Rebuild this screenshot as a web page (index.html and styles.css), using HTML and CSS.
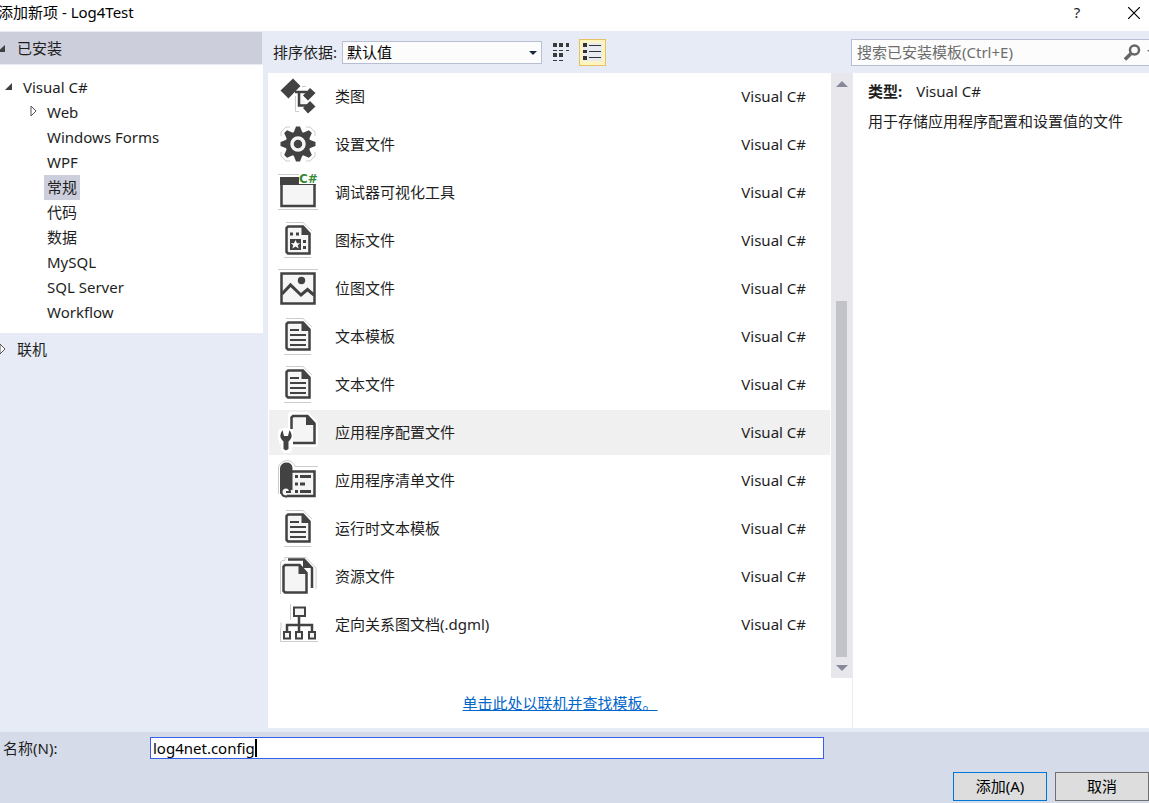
FILE: index.html
```html
<!DOCTYPE html>
<html lang="zh-CN">

<head>
  <meta charset="UTF-8" />
  <meta name="viewport" content="width=device-width, initial-scale=1.0" />
  <title>添加新项 - Log4Test</title>
  <link rel="stylesheet" href="styles.css">
</head>

<body>
  <!-- 公用图标 -->
  <svg class="defs" aria-hidden="true">
    <symbol id="icon-text" viewBox="0 0 40 41">
      <path class="halo" d="M8 2.500H25L34 11M6 38.500H33" />
      <path class="line" d="M10 6.500H25L31.500 13.500V33.500H10L8.500 32V8Z" />
      <path class="dark" d="M23.500 6V15H32.500Z" />
      <path class="line thin" d="M12 14H21M12 19H28M12 24H28M12 29H28" />
    </symbol>
  </svg>

  <header class="title-bar">
    <h1>添加新项 - Log4Test</h1>
    <button class="win-btn" type="button" aria-label="帮助">?</button>
    <button class="win-btn" type="button" aria-label="关闭">
      <svg width="12" height="12" viewBox="0 0 12 12"><path d="M0 0L12 12M12 0L0 12" stroke="#000" stroke-width="1.2" /></svg>
    </button>
  </header>

  <div class="content">
    <nav class="sidebar">
      <h2 class="group open">
        <svg class="arrow" width="10" height="10" viewBox="0 0 10 10"><path d="M9 1V8H1Z" fill="#404040" /></svg>已安装
      </h2>
      <ul class="tree">
        <li class="root"><svg class="arrow" width="10" height="10" viewBox="0 0 10 10"><path d="M8 1V8H1Z" fill="#404040" /></svg>Visual C#
          <ul>
            <li><svg class="arrow" width="8" height="12" viewBox="0 0 8 12"><path d="M1 1V11L6 6Z" fill="#fff" stroke="#555" /></svg><span>Web</span></li>
            <li><span>Windows Forms</span></li>
            <li><span>WPF</span></li>
            <li><span class="current">常规</span></li>
            <li><span>代码</span></li>
            <li><span>数据</span></li>
            <li><span>MySQL</span></li>
            <li><span>SQL Server</span></li>
            <li><span>Workflow</span></li>
          </ul>
        </li>
      </ul>
      <h2 class="group">
        <svg class="arrow" width="8" height="12" viewBox="0 0 8 12"><path d="M1 1V11L6 6Z" fill="#fff" stroke="#555" /></svg>联机
      </h2>
    </nav>

    <main class="main">
      <div class="toolbar">
        <label for="sort">排序依据:</label>
        <div class="select">
          <select id="sort">
            <option>默认值</option>
          </select>
        </div>
        <button class="view-btn" type="button" aria-label="小图标">
          <svg width="17" height="19" viewBox="0 0 17 19" fill="#3a3a3a">
            <path d="M1 0h4v4H1zM7 0h4v4H7zM14 0h3v4h-3zM1 10h4v4H1zM7 10h4v4H7zM1 7h4v1H1zM7 7h4v1H7zM14 7h3v1h-3zM1 17h4v1H1zM7 17h4v1H7z" />
          </svg>
        </button>
        <button class="view-btn active" type="button" aria-label="列表">
          <svg width="19" height="18" viewBox="0 0 19 18">
            <path d="M0 0h19v18H0z" fill="#e9ebf0" />
            <path d="M0 0h4v4H0zM0 7h4v3H0zM0 13h4v4H0zM6 2h12v1H6zM6 8h12v1H6zM6 14h12v1H6z" fill="#333" />
          </svg>
        </button>
        <div class="search">
          <input type="text" placeholder="搜索已安装模板(Ctrl+E)" aria-label="搜索已安装模板">
          <svg width="17" height="17" viewBox="0 0 17 17" fill="none" stroke="#666">
            <circle cx="10.500" cy="6" r="4.500" stroke-width="2.500" />
            <path d="M7 9.500L1 15.500" stroke-width="3.500" />
          </svg>
          <i class="drop"></i>
        </div>
      </div>

      <div class="panes">
        <section class="list">
          <div class="scroller">
            <ul class="items">
              <li>
                <svg viewBox="0 0 40 41">
                  <path class="halo" d="M17.500 20V35.500H21M24 10.500H28" />
                  <path class="line" d="M17 16H29M21 16V29.500H29" />
                  <path class="dark" d="M15 2.500L22.500 10L10.500 22.500L2.500 14.500ZM32 12L37.500 17L30 24.500L25 19.500ZM32 25L37.500 30.500L30 37.500L25 32Z" />
                </svg>
                <span>类图</span><em>Visual C#</em>
              </li>
              <li>
                <svg viewBox="0 0 40 41">
                  <path class="halo" d="M3 12V8L8 3H12M28 3H32L37 8V12M37 28V32L32 37H28M12 37H8L3 32V28" />
                  <g class="dark">
                    <circle cx="20" cy="20" r="12.500" />
                    <path id="tooth" d="M15.500 9L18 2.500H22L24.500 9V31L22 37.500H18L15.500 31Z" />
                    <use href="#tooth" transform="rotate(45 20 20)" />
                    <use href="#tooth" transform="rotate(90 20 20)" />
                    <use href="#tooth" transform="rotate(135 20 20)" />
                  </g>
                  <circle cx="20" cy="20" r="6" fill="#444" stroke="#f5f5f5" stroke-width="3.500" />
                </svg>
                <span>设置文件</span><em>Visual C#</em>
              </li>
              <li>
                <svg viewBox="0 0 40 41">
                  <path class="halo" d="M0 2.500H21M0 37.500H40" />
                  <path class="line" d="M3.500 8V34H36.500V8" />
                  <path class="dark" d="M2 5H22V12H38V13H2Z" />
                  <path d="M21 1H40V12H21Z" fill="#fff" />
                  <text class="lang" x="21" y="11">C#</text>
                </svg>
                <span>调试器可视化工具</span><em>Visual C#</em>
              </li>
              <li>
                <svg viewBox="0 0 40 41">
                  <path class="halo" d="M8 2.500H25L34 11M6 37.500H33" />
                  <path class="line" d="M10 6.500H25L31.500 13.500V33.500H10L8.500 32V8Z" />
                  <path class="dark" d="M23.500 6V15H32.500ZM12 12.500h3v3h-3zM18 12.500h3v3h-3zM12 19H23V30H12ZM25 20h3v3h-3zM25 26h3v3h-3z" />
                  <path d="M17.500 20L19 23.200H22.300L19.700 25.200L20.700 28.500L17.500 26.500L14.300 28.500L15.300 25.200L12.700 23.200H16Z" fill="#fff" />
                </svg>
                <span>图标文件</span><em>Visual C#</em>
              </li>
              <li>
                <svg viewBox="0 0 40 41">
                  <path class="halo" d="M0 1.500H40" />
                  <path class="line" d="M3.500 5.500H36.500V35.500H3.500Z" />
                  <path class="line thick" d="M4 26L12.500 17L23 27L29.500 21.500L36 27" />
                  <circle class="dark" cx="23.500" cy="12.500" r="3.700" />
                </svg>
                <span>位图文件</span><em>Visual C#</em>
              </li>
              <li><svg><use href="#icon-text" /></svg><span>文本模板</span><em>Visual C#</em></li>
              <li><svg><use href="#icon-text" /></svg><span>文本文件</span><em>Visual C#</em></li>
              <li class="selected">
                <svg viewBox="0 0 40 41">
                  <path d="M12 0H30L40 10V33L38 35H14V39L11 41H6L3 38V31L0 27V20L5 16H10V2Z" fill="#fff" />
                  <path class="line" d="M15 4H29.500L36.500 11.500V31H13.500V5.500Z" />
                  <path class="dark" d="M28 3V13H37.500Z" />
                  <path d="M1 17H15V33H12V38H4V32H1Z" fill="#fff" />
                  <path class="dark" d="M4.500 18L6 24H10L11.500 18Q15.500 24 12 28L10.500 29.500V37L8 38.500L5.500 37V29.500L4 28Q.500 24 4.500 18Z" />
                </svg>
                <span>应用程序配置文件</span><em>Visual C#</em>
              </li>
              <li>
                <svg viewBox="0 0 40 41">
                  <path class="halo" d="M.500 34V7Q2 1 9 .500Q15 1 17 6.500H40" />
                  <path class="line" d="M13 11.500H36.500V36H8" />
                  <path class="dark" d="M2 34V8Q3 2.500 8.500 2.500Q14 2.500 14.500 8V30H10Z" />
                  <path class="line thin" d="M9 36.500Q3.500 36.500 3.500 32Q3.500 27.500 8 27.500Q12 27.500 12 32H8" />
                  <path class="dark" d="M17 15h3v3h-3zM22 15h11v3H22zM17 22.500h3v3h-3zM22 22.500h5v3h-5zM17 30h3v3h-3zM22 30h11v3H22z" />
                </svg>
                <span>应用程序清单文件</span><em>Visual C#</em>
              </li>
              <li><svg><use href="#icon-text" /></svg><span>运行时文本模板</span><em>Visual C#</em></li>
              <li>
                <svg viewBox="0 0 40 41">
                  <path class="halo" d="M2.500 38V6L4 4.500H7V1.500H28L38 12V33" />
                  <path class="line open" d="M10 3.500H26L34 12V32" />
                  <path class="dark" d="M25 3V12H35Z" />
                  <path class="line" d="M7 9H21.500L28.500 17V36.500H7L5.500 35V10.500Z" />
                  <path class="dark" d="M20.500 8V18H29.500Z" />
                </svg>
                <span>资源文件</span><em>Visual C#</em>
              </li>
              <li>
                <svg viewBox="0 0 40 41">
                  <path class="halo" d="M12.500 0V16M3 18.500V25M2.500 25V37.500H40" />
                  <path class="line open" d="M21 12V28M9 28V21H34V28" />
                  <path class="line thin" d="M16 3.500H27V12H16ZM6 28H12V34.500H6ZM18 28H24V34.500H18ZM31 28H37V34.500H31Z" />
                </svg>
                <span>定向关系图文档(.dgml)</span><em>Visual C#</em>
              </li>
            </ul>
            <div class="scrollbar">
              <i class="up"></i>
              <i class="thumb"></i>
              <i class="down"></i>
            </div>
          </div>
          <p class="online"><a href="#">单击此处以联机并查找模板。</a></p>
        </section>

        <aside class="detail">
          <p><b>类型:</b>Visual C#</p>
          <p>用于存储应用程序配置和设置值的文件</p>
        </aside>
      </div>
    </main>
  </div>

  <footer class="footer">
    <div class="name-row">
      <label for="name">名称(N):</label>
      <div class="name-field">
        <input id="name" type="text" value="log4net.config">
        <i class="caret"></i>
      </div>
    </div>
    <div class="buttons">
      <button class="btn primary" type="button">添加(A)</button>
      <button class="btn" type="button">取消</button>
    </div>
  </footer>
</body>

</html>
```
FILE: styles.css
```css
* {
  box-sizing: border-box;
}

body {
  display: flex;
  flex-direction: column;
  min-height: 100vh;
  margin: 0;
  overflow-x: hidden;
  font: 15px/25px "Noto Sans", "Noto Sans CJK SC", sans-serif;
  color: #1e1e1e;
  background-color: #e6ebf5;
}

h1, h2, ul, p {
  margin: 0;
  padding: 0;
  font-size: 15px;
  font-weight: normal;
  list-style: none;
}

input, select, button {
  margin: 0;
  padding: 0;
  font: inherit;
  color: inherit;
  outline: none;
}

.defs {
  position: absolute;
  width: 0;
  height: 0;
}

/* 标题栏 */
.title-bar {
  display: flex;
  align-items: center;
  height: 31px;
  padding-bottom: 6px;
  background-color: #fff;
}

.title-bar h1 {
  flex: 1;
  margin-left: -2px;
  color: #000;
}

.win-btn {
  display: flex;
  align-items: center;
  justify-content: center;
  width: 30px;
  height: 25px;
  border: 0;
  background: none;
}

.win-btn + .win-btn {
  margin-left: 27px;
}

.content {
  flex: 1;
  display: flex;
  padding-bottom: 4px;
}

/* 左侧分类 */
.sidebar {
  width: 263px;
  margin-right: 5px;
  padding-top: 1px;
}

.group {
  position: relative;
  height: 32px;
  padding-left: 17px;
  line-height: 32px;
}

.group.open {
  margin: 0 1px 1px 0;
  background-color: #cccedb;
}

.arrow {
  position: absolute;
}

.group .arrow {
  left: -1px;
  top: 10px;
}

.group.open .arrow {
  left: -4px;
  top: 12px;
}

.tree {
  padding: 10px 0 8px;
  background-color: #fff;
}

.tree li {
  position: relative;
}

.tree .root {
  padding-left: 23px;
}

.root > .arrow {
  left: 4px;
  top: 7px;
}

.tree ul {
  padding-left: 21px;
}

.tree ul .arrow {
  left: -14px;
  top: 5px;
}

.tree span {
  display: inline-block;
  padding: 0 3px;
  vertical-align: top;
}

.tree .current {
  background-color: #cccedb;
}

/* 工具栏 */
.main {
  flex: 1;
  display: flex;
  flex-direction: column;
  min-width: 0;
}

.toolbar {
  display: flex;
  align-items: center;
  height: 42px;
  padding-left: 5px;
}

.toolbar label {
  width: 69px;
  white-space: nowrap;
}

.select {
  position: relative;
  width: 200px;
  margin-right: 5px;
}

.select select {
  display: block;
  width: 100%;
  height: 23px;
  padding-left: 4px;
  border: 1px solid #b8bfd3;
  border-radius: 0;
  line-height: 21px;
  color: #000;
  background-color: #fcfcfc;
  appearance: none;
}

.select:after, .drop {
  content: "";
  position: absolute;
  top: 10px;
  right: 5px;
  border: 4px solid transparent;
  border-top-color: #1b293e;
  border-bottom: 0;
}

.view-btn {
  display: flex;
  align-items: center;
  justify-content: center;
  width: 27px;
  height: 27px;
  margin-right: 5px;
  border: 1px solid transparent;
  background: none;
}

.view-btn.active {
  border-color: #e5c365;
  background-color: #fdf4bf;
}

.search {
  position: relative;
  display: flex;
  align-items: center;
  width: 298px;
  height: 27px;
  margin-left: auto;
  padding: 0 8px 0 5px;
  border: 1px solid #b8bfd3;
  border-right: 0;
  background-color: #fcfcfc;
}

.search input {
  flex: 1;
  min-width: 0;
  border: 0;
  background: none;
}

.search input::placeholder {
  color: #6d6d6d;
}

.search .drop {
  right: -6px;
  border-top-color: #717171;
}

/* 模板列表 */
.panes {
  flex: 1;
  display: flex;
}

.list {
  flex: 1;
  display: flex;
  flex-direction: column;
  background-color: #fff;
}

.scroller {
  flex: 1;
  display: flex;
}

.items {
  flex: 1;
  padding: 1px 1px 28px;
}

.items li {
  display: flex;
  align-items: center;
  height: 45px;
  margin-bottom: 3px;
  padding: 0 24px 0 9px;
}

.items .selected {
  background-color: #f0f0f0;
}

.items svg {
  width: 40px;
  height: 41px;
  margin-right: 17px;
}

.items span {
  flex: 1;
}

.items em {
  font-style: normal;
}

.dark {
  fill: #424242;
}

.line {
  fill: #f5f5f5;
  stroke: #424242;
  stroke-width: 2.5;
}

.line.thin {
  stroke-width: 2;
}

.line.thick {
  fill: none;
  stroke-width: 3;
}

.line.open {
  fill: none;
}

.halo {
  fill: none;
  stroke: #ccc;
}

.lang {
  font: bold 12px "DejaVu Sans", sans-serif;
  fill: #388a34;
}

.scrollbar {
  display: flex;
  flex-direction: column;
  align-items: center;
  width: 21px;
  padding: 8px 0 7px;
  background-color: #e8e8ec;
}

.scrollbar .up, .scrollbar .down {
  border: 6px solid transparent;
}

.scrollbar .up {
  border-top: 0;
  border-bottom-color: #868999;
}

.scrollbar .down {
  border-bottom: 0;
  border-top-color: #868999;
}

.thumb {
  width: 11px;
  height: 356px;
  margin: auto 0 8px;
  background-color: #c2c3c9;
}

.online {
  height: 50px;
  line-height: 50px;
  text-align: center;
}

.online a {
  color: #0066cc;
}

.detail {
  width: 296px;
  margin-left: 1px;
  padding: 6px 15px;
  background-color: #fff;
}

.detail p {
  margin-bottom: 5px;
}

.detail b {
  margin-right: 14px;
}

/* 底部 */
.footer {
  padding: 5px 0 2px;
  background-color: #d6dbe9;
}

.name-row {
  display: flex;
  align-items: center;
  height: 22px;
  margin-bottom: 13px;
  padding-left: 3px;
}

.name-row label {
  width: 147px;
}

.name-field {
  position: relative;
  flex: 1;
  margin-right: 325px;
}

.name-field input {
  display: block;
  width: 100%;
  height: 22px;
  padding-left: 2px;
  border: 1px solid #3560f0;
  color: #000;
  background-color: #fff;
}

.caret {
  position: absolute;
  left: 105px;
  top: 2px;
  width: 2px;
  height: 18px;
  background-color: #000;
}

.buttons {
  display: flex;
  justify-content: flex-end;
  gap: 8px;
}

.btn {
  width: 94px;
  height: 29px;
  border: 1px solid #707070;
  color: #000;
  background-color: #ddd;
}

.btn.primary {
  border-color: #0078d7;
}
```
